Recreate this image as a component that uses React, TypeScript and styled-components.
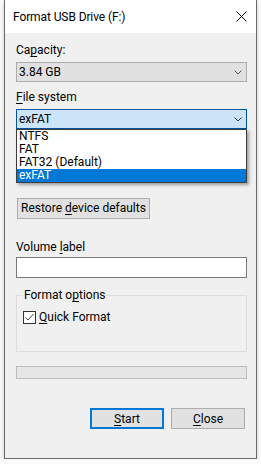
import styled, { createGlobalStyle } from "styled-components";

// Types
type ComboProps = {
  $active?: boolean;
};

type OptionProps = {
  $selected?: boolean;
};

const options = ["NTFS", "FAT", "FAT32 (Default)", "exFAT"];

const Chevron = ({ color }: { color: string }) => (
  <svg width="8" height="5" viewBox="0 0 8 5">
    <path d="M0.5 0.5 L4 4 L7.5 0.5" fill="none" stroke={color} strokeWidth="1" />
  </svg>
);

const FormatDialog = () => {
  return (
    <Window>
      <TitleBar>
        <Title>Format USB Drive (F:)</Title>
        <CloseIcon width="11" height="11" viewBox="0 0 11 11">
          <path d="M0.5 0.5 L10.5 10.5 M10.5 0.5 L0.5 10.5" stroke="#000" strokeWidth="1" />
        </CloseIcon>
      </TitleBar>

      <Body>
        <Label>
          Ca<Key>p</Key>acity:
        </Label>
        <Combo>
          <span>3.84 GB</span>
          <Chevron color="#5a5a5a" />
        </Combo>

        <Label $top={8}>
          <Key>F</Key>ile system
        </Label>
        <ComboWrap>
          <Combo $active>
            <span>exFAT</span>
            <Chevron color="#333" />
          </Combo>
          <DropList>
            {options.map((opt) => (
              <Option key={opt} $selected={opt === "exFAT"}>
                {opt}
              </Option>
            ))}
          </DropList>
        </ComboWrap>

        <RestoreButton>
          Restore <Key>d</Key>evice defaults
        </RestoreButton>

        <Label $top={21}>
          Volume <Key>l</Key>abel
        </Label>
        <TextInput type="text" />

        <Group>
          <Legend>
            Format o<Key>p</Key>tions
          </Legend>
          <CheckRow>
            <CheckBox>
              <svg width="11" height="11" viewBox="0 0 11 11">
                <path d="M1.5 5.5 L4 8 L9.5 2" fill="none" stroke="#444" strokeWidth="1" />
              </svg>
            </CheckBox>
            <span>
              <Key>Q</Key>uick Format
            </span>
          </CheckRow>
        </Group>

        <Progress />

        <Footer>
          <DialogButton $primary>
            <Key>S</Key>tart
          </DialogButton>
          <DialogButton>
            <Key>C</Key>lose
          </DialogButton>
        </Footer>
      </Body>
    </Window>
  );
};

const App = () => (
  <>
    <GlobalStyle />
    <FormatDialog />
  </>
);

// Styles
const GlobalStyle = createGlobalStyle`
  html, body {
    margin: 0;
    padding: 0;
    background: #fbfbfb;
  }
  * {
    box-sizing: border-box;
  }
  body {
    font-family: "Segoe UI", Roboto, "Liberation Sans", sans-serif;
    font-size: 12px;
    color: #000;
  }
`;

const Window = styled.div`
  margin-left: 4px;
  width: 253px;
  height: 459px;
  display: flex;
  flex-direction: column;
  border: 1px solid #6a6a6a;
  border-top: none;
  box-shadow: 0 1px 4px rgba(0, 0, 0, 0.22);
`;

const TitleBar = styled.div`
  height: 33px;
  flex: none;
  display: flex;
  align-items: center;
  justify-content: space-between;
  padding: 0 9px 0 8px;
  background: #fff;
`;

const Title = styled.div`
  font-size: 12px;
  letter-spacing: -0.1px;
  padding-top: 1px;
`;

const CloseIcon = styled.svg`
  display: block;
`;

const Body = styled.div`
  flex: 1;
  display: flex;
  flex-direction: column;
  padding: 10px 9px 0 11px;
  background: #f0f0f0;
`;

const Key = styled.u`
  text-decoration: underline;
  text-underline-offset: 2px;
`;

const Label = styled.div<{ $top?: number }>`
  height: 15px;
  line-height: 15px;
  margin-top: ${(p) => p.$top ?? 0}px;
`;

const ComboWrap = styled.div`
  position: relative;
`;

const Combo = styled.div<ComboProps>`
  height: 20px;
  margin-top: 4px;
  display: flex;
  align-items: center;
  justify-content: space-between;
  padding: 0 4px 0 2px;
  line-height: 18px;
  border: 1px solid ${(p) => (p.$active ? "#005499" : "#adadad")};
  background: ${(p) => (p.$active ? "#cce4f7" : "#e1e1e1")};

  svg {
    display: block;
  }
`;

const DropList = styled.div`
  position: absolute;
  top: 100%;
  left: 0;
  right: 0;
  height: 54px;
  background: #fff;
  border: 1px solid #3c3c3c;
  box-shadow: 2px 2px 3px rgba(0, 0, 0, 0.35);
  z-index: 2;
`;

const Option = styled.div<OptionProps>`
  height: 13px;
  line-height: 13px;
  padding-left: 2px;
  color: ${(p) => (p.$selected ? "#fff" : "#000")};
  background: ${(p) => (p.$selected ? "#0078d7" : "transparent")};
`;

const RestoreButton = styled.div`
  align-self: flex-start;
  margin: 69px 0 0 1px;
  height: 21px;
  width: 133px;
  line-height: 19px;
  text-align: center;
  border: 1px solid #adadad;
  background: #e1e1e1;
`;

const TextInput = styled.input`
  margin: 2px 0 0;
  height: 21px;
  width: 100%;
  border: 1px solid #7a7a7a;
  background: #fff;
  outline: none;
`;

const Group = styled.fieldset`
  margin: 10px 0 0;
  height: 64px;
  padding: 0 0 0 6px;
  border: 1px solid #dcdcdc;
  min-width: 0;
`;

const Legend = styled.legend`
  padding: 0 1px;
  line-height: 15px;
`;

const CheckRow = styled.div`
  margin-top: 8px;
  display: flex;
  align-items: center;
  gap: 3px;
  line-height: 13px;
`;

const CheckBox = styled.span`
  width: 13px;
  height: 13px;
  display: flex;
  align-items: center;
  justify-content: center;
  border: 1px solid #333;
  background: #fff;

  svg {
    display: block;
  }
`;

const Progress = styled.div`
  margin-top: 14px;
  height: 13px;
  border: 1px solid #bcbcbc;
  background: #e6e6e6;
`;

const Footer = styled.div`
  margin: 29px 2px 0 0;
  display: flex;
  justify-content: flex-end;
  gap: 7px;
`;

const DialogButton = styled.div<{ $primary?: boolean }>`
  width: 74px;
  height: 21px;
  display: flex;
  align-items: center;
  justify-content: center;
  border: ${(p) => (p.$primary ? "2px solid #0078d7" : "1px solid #adadad")};
  background: #e1e1e1;
`;

// Exports
export default App;
